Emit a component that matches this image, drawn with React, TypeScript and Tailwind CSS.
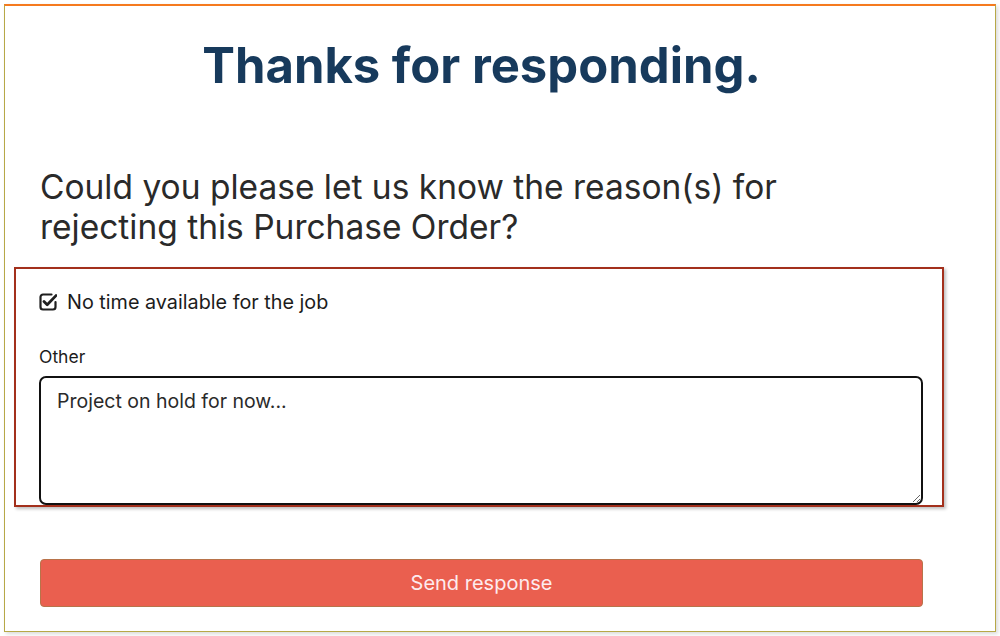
import React from 'react';

// Icon kotak centang (gaya check-square-o)
const CheckSquareIcon: React.FC = () => (
  <svg viewBox="1 1 18 18" className="w-[18px] h-[18px]" fill="none" stroke="#1f1f1f">
    <path d="M13.5 2.5H5A2.5 2.5 0 0 0 2.5 5v10A2.5 2.5 0 0 0 5 17.5h10a2.5 2.5 0 0 0 2.5-2.5v-5" strokeWidth={2.2} strokeLinecap="round" />
    <path d="M6 9.5l3.2 3.2L18 3.6" strokeWidth={2.8} strokeLinecap="round" strokeLinejoin="round" />
  </svg>
);

const App: React.FC = () => {
  return (
    <div className="w-[1000px] h-[636px] bg-white p-[4px] font-['Inter','Liberation_Sans',sans-serif]">
      <div className="h-full bg-white border border-[#b7a847] border-t-2 border-t-[#f57a1e] shadow-[2px_2px_4px_rgba(0,0,0,0.15)] pl-[35px] pr-[72px]">
        {/* Judul */}
        <h1 className="mt-[30px] text-center text-[49px] leading-[60px] font-bold text-[#173a5c]">
          Thanks for responding.
        </h1>

        <h2 className="mt-[71px] text-[33.5px] leading-[40px] text-[#2a2a2a]">
          Could you please let us know the reason(s) for
          <br />
          rejecting this Purchase Order?
        </h2>

        {/* Kotak alasan */}
        <div className="mt-[20px] -ml-[26px] -mr-[21px] pl-[23px] pr-[19px] pt-[21px] border-2 border-[#a3301c] shadow-[2px_2px_3px_rgba(0,0,0,0.25)]">
          <label className="flex items-center gap-[10px] text-[19.8px] leading-[24px] text-[#1c1c1c]">
            <CheckSquareIcon />
            No time available for the job
          </label>

          <p className="mt-[33px] text-[17.5px] leading-[20px] text-[#1c1c1c]">Other</p>

          <textarea
            defaultValue="Project on hold for now..."
            className="mt-[9px] block w-full h-[129px] border-2 border-[#111] rounded-[7px] px-[16px] py-[10px] text-[19.5px] leading-[26px] text-[#2a2a2a] outline-none resize-y font-['Inter','Liberation_Sans',sans-serif]"
          />
        </div>

        {/* Tombol kirim */}
        <button className="mt-[52px] w-full h-[48px] rounded-[4px] bg-[#ea5f4f] border border-[#b8734a] text-[#fdebee] text-[20px]">
          Send response
        </button>
      </div>
    </div>
  );
};

export default App;
